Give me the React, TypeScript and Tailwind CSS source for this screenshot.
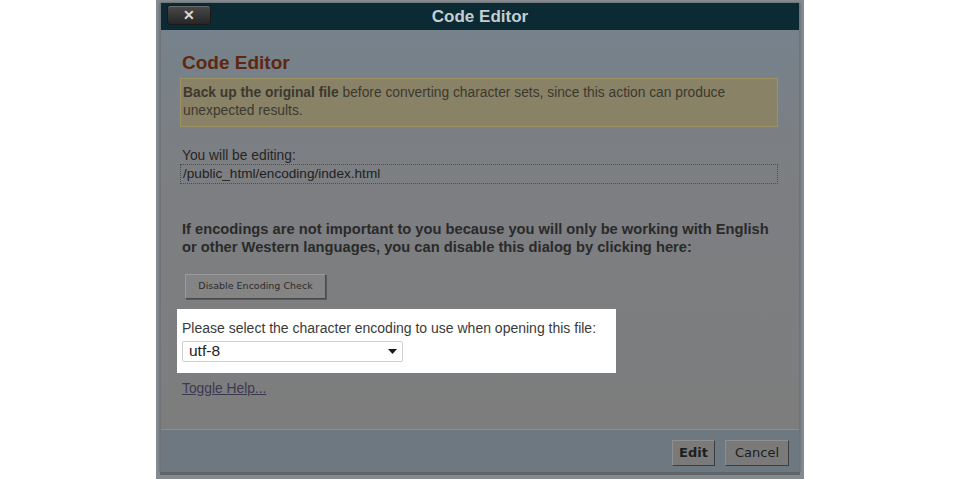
import React from 'react';

export default function App() {
  return (
    <div className="flex h-[479px] w-full bg-white font-['Liberation_Sans',Arial,sans-serif]">
      <div className="ml-[156px] flex w-[648px] flex-col bg-[#858a8f] px-[4px] pt-[3px]">
        <div className="flex flex-col border-x border-[#6f7478] shadow-[0_0_2px_rgba(0,0,0,0.4)]">
          {/* title bar */}
          <div className="relative flex h-[27px] items-center justify-center bg-[#0b2a33]">
            <button className="absolute left-[6px] top-[2px] flex h-[20px] w-[44px] items-center justify-center rounded-[3px] border border-[#1a1a1a] bg-gradient-to-b from-[#4a4a4a] to-[#262626] text-[14px] font-bold text-[#d8d8d8] shadow-[inset_0_1px_0_rgba(255,255,255,0.2)]">
              ✕
            </button>
            <span className="text-[17px] font-bold text-[#c4ced2]">Code Editor</span>
          </div>

          {/* body */}
          <div className="flex h-[399px] flex-col bg-gradient-to-b from-[#76828c] via-[#7c7f83] via-30% to-[#7d7d7d] pl-[19px] pr-[21px] pt-[22px]">
            <h1 className="pl-[2px] text-[19px] font-bold leading-[22px] text-[#5e2810]">Code Editor</h1>
            <div className="mt-[4px] h-[49px] border border-[#9c9264] bg-[#898266] px-[2px] pt-[5px] text-[13.8px] leading-[18px] text-[#3b392f]">
              <span className="font-bold">Back up the original file</span> before converting character sets, since this action can produce unexpected results.
            </div>

            <div className="mt-[21px] pl-[2px] text-[13.8px] leading-[16px] text-[#262626]">You will be editing:</div>
            <div className="h-[20px] border border-dotted border-[#4e4e4e] pl-[2px] text-[13.6px] leading-[18px] text-[#1e1e1e]">
              /public_html/encoding/index.html
            </div>

            <p className="mt-[36px] w-[596px] pl-[2px] text-[14.7px] font-bold leading-[18px] text-[#2a2a2a]">
              If encodings are not important to you because you will only be working with English or other Western languages, you can disable this dialog by clicking here:
            </p>

            <div className="mt-[16px] pl-[5px]">
              <button className="h-[25px] w-[141px] border border-t-[#9a9a9a] border-l-[#9a9a9a] border-r-[#4a4a4a] border-b-[#4a4a4a] bg-[#848484] font-['DejaVu_Sans',Verdana,sans-serif] text-[9.5px] text-[#2c2c2c] shadow-[1px_1px_0_#5a5a5a]">
                Disable Encoding Check
              </button>
            </div>

            <div className="ml-[-3px] mt-[10px] h-[64px] w-[439px] bg-white pl-[5px] pt-[11px]">
              <div className="text-[14px] leading-[16px] text-[#3a3a3a]">
                Please select the character encoding to use when opening this file:
              </div>
              <div className="mt-[5px] flex h-[21px] w-[221px] items-center justify-between rounded-[2px] border border-[#d0d0d0] pl-[6px] pr-[5px]">
                <span className="text-[15.5px] leading-[18px] text-[#222]">utf-8</span>
                <svg width="9" height="5" viewBox="0 0 9 5">
                  <path d="M0 0h9L4.5 5z" fill="#1a1a1a" />
                </svg>
              </div>
            </div>

            <a className="mt-[8px] self-start pl-[2px] text-[13.8px] leading-[16px] text-[#3d3850] underline">Toggle Help...</a>
          </div>

          {/* footer */}
          <div className="flex h-[43px] items-center justify-end gap-[10px] border-t border-[#8c8c8c] bg-[#6d7880] pr-[10px] pt-[3px]">
            <button className="h-[26px] w-[43px] border border-t-[#8f8f8f] border-l-[#8f8f8f] border-r-[#3e3e3e] border-b-[#3e3e3e] bg-[#7a7a7a] font-['DejaVu_Sans',Verdana,sans-serif] text-[13px] font-bold text-[#1e1e1e]">
              Edit
            </button>
            <button className="h-[26px] w-[64px] border border-t-[#8f8f8f] border-l-[#8f8f8f] border-r-[#3e3e3e] border-b-[#3e3e3e] bg-[#7a7a7a] font-['DejaVu_Sans',Verdana,sans-serif] text-[13px] text-[#1e1e1e]">
              Cancel
            </button>
          </div>
        </div>
        <div className="h-[4px] border-t-[3px] border-[#5f6468]" />
      </div>
    </div>
  );
}
